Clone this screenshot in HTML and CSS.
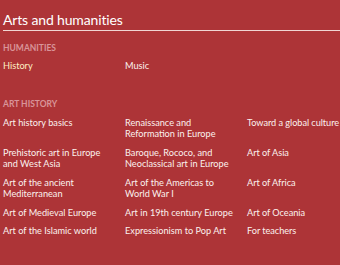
FILE: index.html
```html
<!DOCTYPE html>
<html>
<head>
<meta charset="utf-8">
<link rel="stylesheet" href="styles.css">
</head>
<body>
<div class="panel">
  <h1 class="title">Arts and humanities</h1>
  <section class="group">
    <h2 class="heading">HUMANITIES</h2>
    <ul class="grid">
      <li class="link active">History</li>
      <li class="link">Music</li>
    </ul>
  </section>
  <section class="group art">
    <h2 class="heading">ART HISTORY</h2>
    <ul class="grid">
      <li class="link">Art history basics</li>
      <li class="link">Renaissance and Reformation in Europe</li>
      <li class="link">Toward a global culture</li>
      <li class="link">Prehistoric art in Europe and West Asia</li>
      <li class="link">Baroque, Rococo, and Neoclassical art in Europe</li>
      <li class="link">Art of Asia</li>
      <li class="link">Art of the ancient Mediterranean</li>
      <li class="link">Art of the Americas to World War I</li>
      <li class="link">Art of Africa</li>
      <li class="link">Art of Medieval Europe</li>
      <li class="link">Art in 19th century Europe</li>
      <li class="link">Art of Oceania</li>
      <li class="link">Art of the Islamic world</li>
      <li class="link">Expressionism to Pop Art</li>
      <li class="link">For teachers</li>
    </ul>
  </section>
</div>
</body>
</html>
```
FILE: styles.css
```css
html, body {
  margin: 0;
  padding: 0;
  background: #ad3437;
}
body {
  width: 340px;
  height: 265px;
  overflow: hidden;
  font-family: Lato, "Open Sans", sans-serif;
  color: #fbf1ee;
}
.panel {
  padding: 11px 0 0 3px;
}
.title {
  margin: 0;
  font-size: 14px;
  font-weight: 400;
  line-height: 18px;
  letter-spacing: -0.15px;
  color: #ffffff;
  padding-bottom: 1px;
  border-bottom: 1px solid #f1d6d3;
}
.group {
  margin-top: 11px;
}
.group.art {
  margin-top: 26px;
}
.heading {
  margin: 0 0 6px;
  font-size: 8.5px;
  font-weight: 700;
  line-height: 12px;
  color: #d99499;
}
.art .heading {
  margin-bottom: 7px;
}
.grid {
  list-style: none;
  margin: 0;
  padding: 0;
  display: grid;
  grid-template-columns: 122px 122px minmax(0, 1fr);
  row-gap: 7px;
}
.link {
  font-size: 9.2px;
  line-height: 11.5px;
  padding-right: 8px;
}
.grid .link:nth-child(3n) {
  padding-right: 0;
  letter-spacing: -0.05px;
  white-space: nowrap;
}
.link.active {
  color: #fdefc4;
}
```
